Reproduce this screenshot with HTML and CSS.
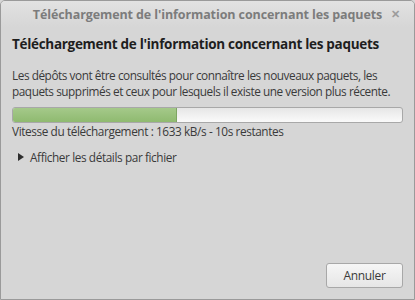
FILE: index.html
```html
<!DOCTYPE html>
<html lang="fr">
<head>
    <meta charset="UTF-8">
    <title>Téléchargement de l'information concernant les paquets</title>
    <link rel="stylesheet" href="styles.css">
</head>
<body>
    <div class="window">
        <div class="titlebar">
            <span class="title">Téléchargement de l'information concernant les paquets</span>
            <span class="close">✕</span>
        </div>
        <div class="content">
            <h1>Téléchargement de l'information concernant les paquets</h1>
            <p class="desc">Les dépôts vont être consultés pour connaître les nouveaux paquets, les paquets supprimés et ceux pour lesquels il existe une version plus récente.</p>
            <div class="progress">
                <div class="progress-fill" style="width: 42%"></div>
            </div>
            <p class="speed">Vitesse du téléchargement : 1633 kB/s - 10s restantes</p>
            <div class="expander">
                <svg width="8" height="10" viewBox="0 0 8 10"><path d="M1 1 L7 5 L1 9 Z" fill="#2e2e2e"/></svg>
                <span>Afficher les détails par fichier</span>
            </div>
        </div>
        <div class="actions">
            <button>Annuler</button>
        </div>
    </div>
</body>
</html>
```

FILE: styles.css
```css
html, body {
    margin: 0;
    height: 100%;
}
body {
    font-family: "Open Sans", "Noto Sans", sans-serif;
    color: #3a3a3a;
    background: #d6d6d6;
}
.window {
    height: 100%;
    box-sizing: border-box;
    border: 1px solid #9a9a9a;
    border-radius: 5px 5px 0 0;
    background: #d6d6d6;
    display: flex;
    flex-direction: column;
}
.titlebar {
    height: 26px;
    display: flex;
    align-items: center;
    justify-content: center;
    position: relative;
    background: linear-gradient(#e2e2e2, #d6d6d6);
    border-radius: 4px 4px 0 0;
}
.title {
    font-size: 12.5px;
    font-weight: bold;
    letter-spacing: -0.1px;
    color: #7c7c7c;
}
.close {
    position: absolute;
    right: 14px;
    top: 5px;
    font-size: 11px;
    font-weight: bold;
    color: #9c9c9c;
}
.content {
    padding: 8px 11px 0 11px;
    flex: 1;
}
h1 {
    font-size: 13.5px;
    font-weight: bold;
    letter-spacing: -0.3px;
    color: #1e1e1e;
    margin: 0 0 14px 0;
}
.desc {
    font-size: 11.8px;
    line-height: 16px;
    letter-spacing: -0.45px;
    margin: 0 0 8px 0;
}
.progress {
    height: 14px;
    border: 1px solid #a8a8a8;
    border-radius: 3px;
    background: linear-gradient(#e6e6e6, #fafafa);
    overflow: hidden;
}
.progress-fill {
    height: 100%;
    background: linear-gradient(#a5c98a, #8fba70);
    border-right: 1px solid #7ea562;
}
.speed {
    font-size: 11.8px;
    letter-spacing: -0.4px;
    margin: 0;
}
.expander {
    margin-top: 10px;
    display: flex;
    align-items: center;
    gap: 5px;
    font-size: 11.8px;
    letter-spacing: -0.4px;
    padding-left: 5px;
}
.actions {
    display: flex;
    justify-content: flex-end;
    padding: 0 11px 11px 0;
}
button {
    font-family: inherit;
    font-size: 12px;
    letter-spacing: -0.3px;
    color: #3a3a3a;
    width: 77px;
    height: 25px;
    border: 1px solid #a8a8a8;
    border-radius: 3px;
    background: linear-gradient(#f6f6f6, #e6e6e6);
}
```
